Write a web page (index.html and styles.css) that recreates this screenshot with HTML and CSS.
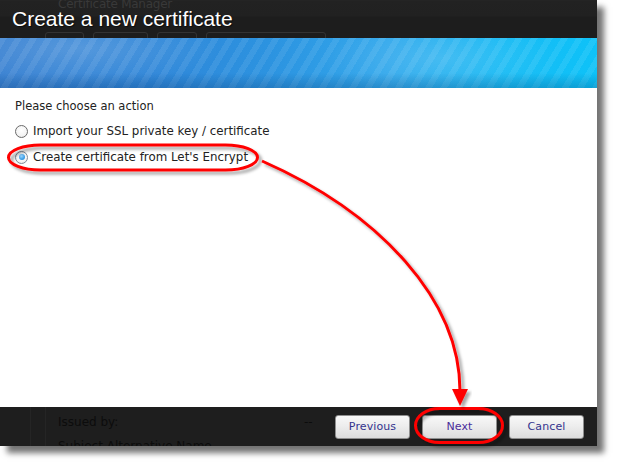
FILE: index.html
```html
<!DOCTYPE html>
<html>
<head>
<meta charset="utf-8">
<link rel="stylesheet" href="styles.css">
</head>
<body>
<div class="stage">
  <div class="dialog">
    <div class="header">
      <div class="ghost">
        <div class="ghost-title">Certificate Manager</div>
        <div class="ghost-tabs">
          <span class="tab t1"></span>
          <span class="tab t2"></span>
          <span class="tab t3"></span>
          <span class="tab t4"></span>
        </div>
      </div>
      <div class="title">Create a new certificate</div>
    </div>
    <div class="banner"></div>
    <div class="content">
      <div class="prompt">Please choose an action</div>
      <label class="option"><span class="radio"></span><span>Import your SSL private key / certificate</span></label>
      <label class="option"><span class="radio checked"></span><span>Create certificate from Let's Encrypt</span></label>
    </div>
    <div class="footer">
      <div class="ghost-foot">
        <div class="gcol c1"></div>
        <div class="gcol c2"></div>
        <div class="grows">
          <div class="grow"><span class="glabel">Issued by:</span><span>--</span></div>
          <div class="grow"><span class="glabel">Subject Alternative Name</span></div>
        </div>
      </div>
      <div class="buttons">
        <button class="btn">Previous</button>
        <button class="btn next">Next</button>
        <button class="btn">Cancel</button>
      </div>
    </div>
  </div>
  <svg class="annot" width="617" height="467" viewBox="0 0 617 467">
    <defs>
      <filter id="sh" x="-20%" y="-20%" width="140%" height="140%">
        <feDropShadow dx="3" dy="3" stdDeviation="1.6" flood-color="#000" flood-opacity="0.35"/>
      </filter>
    </defs>
    <g filter="url(#sh)" fill="none" stroke="#f00" stroke-width="3">
      <rect x="8.5" y="145" width="249" height="25" rx="32" ry="12.5"/>
      <path d="M262 161 C 380 213, 460 300, 460 391"/>
      <rect x="415.5" y="408.5" width="87" height="34" rx="24" ry="17"/>
    </g>
    <polygon filter="url(#sh)" points="452,389 468,389 460,406" fill="#f00"/>
  </svg>
</div>
</body>
</html>
```
FILE: styles.css
```css
html, body {
  margin: 0;
  padding: 0;
  background: #fff;
}

.stage {
  position: relative;
  width: 617px;
  height: 467px;
  overflow: hidden;
  background: #fff;
}

.dialog {
  width: 597px;
  height: 446px;
  display: flex;
  flex-direction: column;
  box-shadow: 7px 7px 6px rgba(0, 0, 0, 0.55);
}

/* header */
.header {
  height: 38px;
  display: grid;
  grid-template-rows: 38px;
  overflow: hidden;
  background: linear-gradient(#262626 0, #222 1px, #212121 16px, #1d1d1d 17px, #1d1d1d 100%);
}

.ghost, .title {
  grid-area: 1 / 1;
}

.ghost {
  display: flex;
  flex-direction: column;
}

.ghost-title {
  margin-top: -3px;
  padding-left: 58px;
  font: 12px/14px "DejaVu Sans", sans-serif;
  letter-spacing: -0.25px;
  color: #393939;
}

.ghost-tabs {
  display: flex;
  gap: 9px;
  margin-top: 21px;
  padding-left: 45px;
}

.tab {
  height: 12px;
  flex: none;
  border: 1px solid #333;
  border-radius: 3px 3px 0 0;
}
.t1 { width: 37px; }
.t2 { width: 53px; }
.t3 { width: 38px; }
.t4 { width: 118px; }

.title {
  padding-left: 12px;
  font: 21px/38px "Liberation Sans", Arial, sans-serif;
  color: #fff;
  text-shadow: 1px 1px 1px rgba(0, 0, 0, 0.6);
  white-space: nowrap;
}

/* banner */
.banner {
  height: 50px;
  background:
    linear-gradient(to bottom, rgba(0,0,0,0) 70%, rgba(0,40,90,0.22) 100%),
    repeating-linear-gradient(121deg, rgba(255,255,255,0.08) 0 6px, rgba(255,255,255,0) 6px 13px),
    radial-gradient(ellipse 140px 40px at 80px 10px, rgba(255,255,255,0.16), rgba(255,255,255,0)),
    radial-gradient(ellipse 120px 40px at 440px 20px, rgba(255,255,255,0.14), rgba(255,255,255,0)),
    linear-gradient(to right, #3a82d2 0%, #2f86d8 25%, #2c93e0 45%, #31a8ec 65%, #17bbf4 85%, #0ec2f8 100%);
}

/* content */
.content {
  flex: 1;
  background: #fff;
  padding: 10px 0 0 15px;
  font-family: "DejaVu Sans", Verdana, sans-serif;
  color: #222;
}

.prompt {
  font-size: 11.5px;
  line-height: 16px;
  margin-bottom: 4px;
}

.option {
  display: flex;
  align-items: center;
  gap: 5px;
  height: 26px;
  font-size: 11.85px;
}

.radio {
  width: 11px;
  height: 11px;
  border: 1px solid #6b6b6b;
  border-radius: 50%;
  background: radial-gradient(circle at 50% 40%, #fff 0, #f4f4f4 60%, #dcdcdc 100%);
  display: flex;
  align-items: center;
  justify-content: center;
}

.radio.checked {
  border-color: #7e8a98;
}

.radio.checked::after {
  content: "";
  width: 6px;
  height: 6px;
  border-radius: 50%;
  background: radial-gradient(circle at 40% 35%, #9ad6ff 0, #3d9ee6 60%, #1f7fd0 100%);
}

/* footer */
.footer {
  height: 39px;
  display: grid;
  grid-template-rows: 39px;
  overflow: hidden;
  background: #1e1e1e;
}

.ghost-foot, .buttons {
  grid-area: 1 / 1;
}

.ghost-foot {
  display: flex;
  font: 12px/16px "DejaVu Sans", sans-serif;
  color: #0c0c0c;
}

.gcol {
  border-right: 1px solid #252525;
}
.c1 { width: 30px; }
.c2 { width: 14px; }

.grows {
  padding: 7px 0 0 12px;
  display: flex;
  flex-direction: column;
  gap: 8px;
}

.grow {
  display: flex;
}

.glabel {
  width: 246px;
  white-space: nowrap;
}

.buttons {
  display: flex;
  justify-content: flex-end;
  align-items: center;
  gap: 12px;
  padding-right: 13px;
}

.btn {
  width: 75px;
  height: 24px;
  padding: 0;
  border: 1px solid #8f8f8f;
  border-radius: 3px;
  background: linear-gradient(#f8f8f8 0%, #ececec 50%, #dcdcdc 100%);
  font: 11px "DejaVu Sans", Verdana, sans-serif;
  color: #34348e;
  letter-spacing: 0.1px;
}

.btn.next {
  color: #4a2c9a;
}

/* annotations overlay */
.annot {
  position: absolute;
  left: 0;
  top: 0;
  pointer-events: none;
}
```
